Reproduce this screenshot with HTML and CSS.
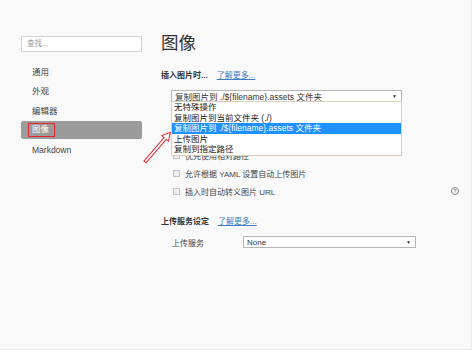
FILE: index.html
```html
<!DOCTYPE html>
<html lang="zh">
<head>
<meta charset="utf-8">
<link rel="stylesheet" href="styles.css">
</head>
<body>
<div class="window">
  <aside class="sidebar">
    <div class="search">查找...</div>
    <nav class="nav">
      <div class="nav-item">通用</div>
      <div class="nav-item">外观</div>
      <div class="nav-item">编辑器</div>
      <div class="nav-item active"><span class="mark">图像</span></div>
      <div class="nav-item">Markdown</div>
    </nav>
  </aside>
  <main class="main">
    <h1 class="title">图像</h1>
    <div class="section-head"><b>插入图片时...</b><a class="link">了解更多...</a></div>
    <div class="select-wrap">
      <div class="select wide"><span>复制图片到 ./${filename}.assets 文件夹</span><span class="caret">▼</span></div>
      <ul class="options">
        <li>无特殊操作</li>
        <li>复制图片到当前文件夹 (./)</li>
        <li class="hl">复制图片到 ./${filename}.assets 文件夹</li>
        <li>上传图片</li>
        <li>复制到指定路径</li>
      </ul>
    </div>
    <div class="checks">
      <div class="check"><span class="box"></span>优先使用相对路径</div>
      <div class="check"><span class="box"></span>允许根据 YAML 设置自动上传图片</div>
      <div class="check"><span class="box"></span>插入时自动转义图片 URL<span class="help">?</span></div>
    </div>
    <div class="section-head second"><b>上传服务设定</b><a class="link">了解更多...</a></div>
    <div class="field">
      <span class="label">上传服务</span>
      <div class="select service"><span>None</span><span class="caret">▼</span></div>
    </div>
  </main>
  <svg class="arrow" width="472" height="350" viewBox="0 0 472 350">
    <g transform="translate(145 162) rotate(-49.5)">
      <polygon points="0,-1.4 31,-1.4 31,-4.4 39,0 31,4.4 31,1.4 0,1.4" fill="#fff" stroke="#e2262b" stroke-width="1"/>
    </g>
  </svg>
</div>
</body>
</html>
```

FILE: styles.css
```css
* { box-sizing: border-box; margin: 0; padding: 0; }
body {
  background: #ffffff;
  font-family: "Liberation Sans", "Noto Sans CJK SC", sans-serif;
  color: #333;
}
.window {
  position: relative;
  width: 472px;
  height: 350px;
  background: #f9f9f9;
  border-right: 1px solid #ececec;
  border-bottom: 1px solid #ececec;
  display: flex;
}
.sidebar {
  width: 150px;
  padding: 36px 0 0 21px;
}
.search {
  width: 121px;
  height: 16px;
  border: 1px solid #d6d6d6;
  background: #fff;
  font-size: 7.5px;
  line-height: 14px;
  color: #9a9a9a;
  padding-left: 5px;
}
.nav { margin-top: 11px; width: 121px; }
.nav-item {
  height: 19.4px;
  line-height: 19.4px;
  font-size: 8.5px;
  padding-left: 11px;
  color: #444;
}
.nav-item.active {
  background: #9b9b9b;
  color: #fff;
  border-radius: 2px;
  padding-left: 7px;
  height: 18px;
  margin-bottom: 1.4px;
  display: flex;
  align-items: center;
}
.mark {
  display: inline-block;
  border: 1.5px solid #e2262b;
  padding: 0 5px 0 3px;
  height: 14px;
  line-height: 11px;
}
.main {
  flex: 1;
  padding: 33px 0 0 11px;
  font-size: 8px;
  color: #333;
}
.title {
  font-size: 17.5px;
  font-weight: normal;
  line-height: 20px;
  color: #333;
}
.section-head {
  margin-top: 17px;
  height: 12px;
  line-height: 12px;
  display: flex;
  gap: 9px;
}
.section-head b { font-weight: bold; color: #333; }
.link { color: #3f7cc0; text-decoration: underline; }
.section-head.second { margin-top: 16px; }
.select-wrap {
  position: relative;
  margin: 8px 0 0 10px;
  width: 231px;
}
.select {
  height: 12px;
  border: 1px solid #b5b5b5;
  background: #fff;
  display: flex;
  justify-content: space-between;
  align-items: center;
  padding: 0 4px 0 3px;
  font-size: 8.5px;
  color: #333;
}
.caret { font-size: 5px; color: #333; }
.options {
  position: absolute;
  left: 0;
  top: 11px;
  width: 231px;
  list-style: none;
  background: #fff;
  border: 1px solid #d8cfb8;
  font-size: 8.5px;
  z-index: 2;
}
.options li {
  height: 10.6px;
  line-height: 10.6px;
  padding-left: 2px;
  color: #222;
  white-space: nowrap;
}
.options li.hl { background: #1e90ff; color: #fff; }
.checks { margin: 53px 0 0 12px; width: 286px; }
.check {
  height: 18px;
  display: flex;
  align-items: center;
  font-size: 8px;
  color: #444;
  position: relative;
}
.check:first-child { margin-top: -9px; }
.box {
  width: 7px;
  height: 7px;
  border: 1px solid #c4c4c4;
  background: #eeeeee;
  margin-right: 5px;
}
.help {
  margin-left: auto;
  width: 8px;
  height: 8px;
  border: 1px solid #8a8a8a;
  border-radius: 50%;
  font-size: 6px;
  line-height: 6px;
  text-align: center;
  color: #777;
}
.field {
  margin: 8px 0 0 11px;
  display: flex;
  align-items: center;
}
.label { width: 71px; font-size: 8px; color: #444; }
.select.service { width: 173px; font-size: 8px; }
.arrow {
  position: absolute;
  left: 0;
  top: 0;
  pointer-events: none;
  z-index: 3;
}
```
